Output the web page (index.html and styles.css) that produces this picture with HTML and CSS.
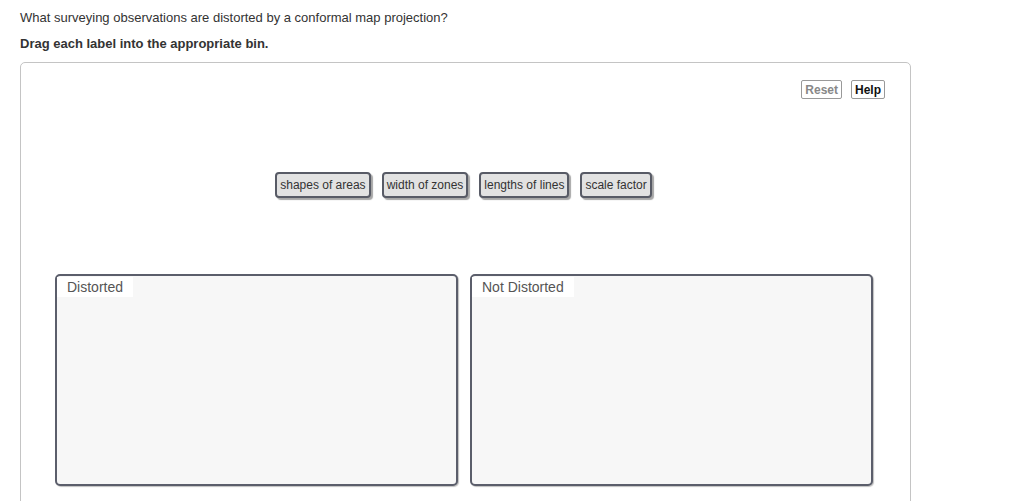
FILE: index.html
```html
<!doctype html>
<html lang="en">
<head>
    <meta charset="UTF-8">
    <title>Drag each label into the appropriate bin</title>
    <link rel="stylesheet" href="styles.css">
</head>
<body>
<p class="question">What surveying observations are distorted by a conformal map projection?</p>
<p class="instruction">Drag each label into the appropriate bin.</p>
<div class="board">
    <div class="tools">
        <button class="tool reset">Reset</button>
        <button class="tool help">Help</button>
    </div>
    <div class="labels">
        <span class="label">shapes of areas</span>
        <span class="label">width of zones</span>
        <span class="label">lengths of lines</span>
        <span class="label">scale factor</span>
    </div>
    <div class="bins">
        <div class="bin"><span class="bin-title">Distorted</span></div>
        <div class="bin"><span class="bin-title">Not Distorted</span></div>
    </div>
</div>
</body>
</html>
```

FILE: styles.css
```css
html * {
    margin: 0;
    padding: 0;
}

body {
    padding: 10px 100px 0 20px;
    font-family: "Liberation Sans", Arial, sans-serif;
    font-size: 13px;
    color: #333;
    background-color: #fff;
}

.question {
    line-height: 16px;
}

.instruction {
    margin: 10px 0;
    line-height: 16px;
    font-weight: bold;
}

.board {
    width: 889px;
    height: 460px;
    padding-top: 17px;
    border: 1px solid #c4c4c4;
    border-radius: 5px;
}

.tools {
    display: flex;
    justify-content: flex-end;
    gap: 9px;
    padding-right: 25px;
}

.tool {
    height: 19px;
    padding: 0 3px;
    border: 1px solid #999;
    border-radius: 2px;
    background-color: #fff;
    font-family: "Liberation Sans", Arial, sans-serif;
    font-size: 12px;
    font-weight: bold;
}

.reset {
    color: #888;
}

.help {
    color: #111;
}

.labels {
    display: flex;
    justify-content: center;
    gap: 11px;
    margin-top: 73px;
    padding-right: 4px;
    font-size: 12px;
}

.label {
    display: inline-block;
    height: 22px;
    line-height: 22px;
    padding: 0 3px;
    border: 2px solid #585b66;
    border-radius: 4px;
    background-color: #e2e2e2;
    box-shadow: 2px 2px 1px rgba(0, 0, 0, 0.35);
    color: #333;
}

.bins {
    display: flex;
    gap: 12px;
    margin-top: 76px;
    padding-left: 34px;
}

.bin {
    width: 399px;
    height: 208px;
    border: 2px solid #5b5e6b;
    border-radius: 5px;
    background-color: #f7f7f7;
    box-shadow: 1px 1px 1px rgba(0, 0, 0, 0.25);
}

.bin-title {
    display: inline-block;
    height: 20px;
    line-height: 20px;
    padding: 0 10px;
    margin-top: 1px;
    background-color: #fff;
    font-size: 14px;
    color: #555;
}
```
